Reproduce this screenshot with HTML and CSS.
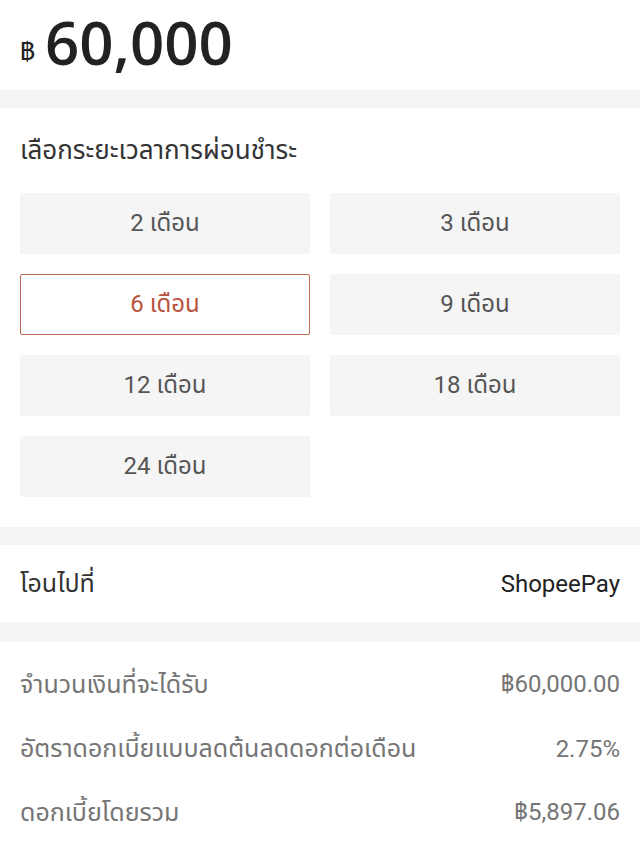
FILE: index.html
```html
<!DOCTYPE html>
<html lang="th">
<head>
  <meta charset="UTF-8" />
  <title>ผ่อนชำระ</title>
  <link rel="stylesheet" href="styles.css">
</head>
<body>

  <div class="amount-box">
    <span class="currency">฿</span>
    <span class="amount">60,000</span>
  </div>

  <div class="section">
    <h3>เลือกระยะเวลาการผ่อนชำระ</h3>
    <div class="plans">
      <div class="plan">2 เดือน</div>
      <div class="plan">3 เดือน</div>
      <div class="plan active">6 เดือน</div>
      <div class="plan">9 เดือน</div>
      <div class="plan">12 เดือน</div>
      <div class="plan">18 เดือน</div>
      <div class="plan">24 เดือน</div>
    </div>
  </div>

  <div class="section row-line">
    <span class="label">โอนไปที่</span>
    <span class="dark">ShopeePay</span>
  </div>

  <div class="section summary">
    <div class="sum-row">
      <span class="label">จำนวนเงินที่จะได้รับ</span>
      <span>฿60,000.00</span>
    </div>
    <div class="sum-row">
      <span class="label">อัตราดอกเบี้ยแบบลดต้นลดดอกต่อเดือน</span>
      <span>2.75%</span>
    </div>
    <div class="sum-row">
      <span class="label">ดอกเบี้ยโดยรวม</span>
      <span>฿5,897.06</span>
    </div>
  </div>

</body>
</html>
```

FILE: styles.css
```css
body {
  margin: 0;
  background: #f5f5f5;
  font-family: Roboto, "Noto Sans Thai", "Noto Sans", sans-serif;
  color: #757575;
}

.amount-box {
  background: #fff;
  height: 90px;
  padding: 0 20px;
  display: flex;
  align-items: center;
  gap: 10px;
  margin-bottom: 18px;
}

.currency {
  font-family: "Open Sans", sans-serif;
  font-size: 25px;
  color: #222;
  margin-top: 12px;
}

.amount {
  font-family: "Open Sans", sans-serif;
  font-size: 60px;
  font-weight: 600;
  color: #222;
  margin-top: -6px;
}

.section {
  background: #fff;
  padding: 0 20px;
  margin-bottom: 18px;
}

h3 {
  margin: 0;
  padding: 23px 0 22px;
  font-size: 26px;
  font-weight: normal;
  color: #333;
}

.plans {
  display: grid;
  grid-template-columns: 1fr 1fr;
  gap: 20px;
  padding-bottom: 30px;
}

.plan {
  height: 61px;
  background: #f5f5f5;
  border: 1px solid #f5f5f5;
  border-radius: 2px;
  display: flex;
  align-items: center;
  justify-content: center;
  font-size: 24px;
  color: #555;
  box-sizing: border-box;
}

.plan.active {
  background: #fff;
  border-color: #bf6a56;
  color: #b9533d;
}

.row-line {
  height: 77px;
  margin-bottom: 20px;
  display: flex;
  align-items: center;
  justify-content: space-between;
  font-size: 24px;
  color: #333;
}

.row-line .label {
  font-size: 25px;
}

.row-line .dark {
  color: #222;
}

.summary {
  padding-top: 11px;
  padding-bottom: 30px;
  margin-bottom: 0;
}

.sum-row {
  height: 64px;
  display: flex;
  align-items: center;
  justify-content: space-between;
  font-size: 24px;
  color: #757575;
}

.sum-row .label {
  font-size: 25px;
}
```
